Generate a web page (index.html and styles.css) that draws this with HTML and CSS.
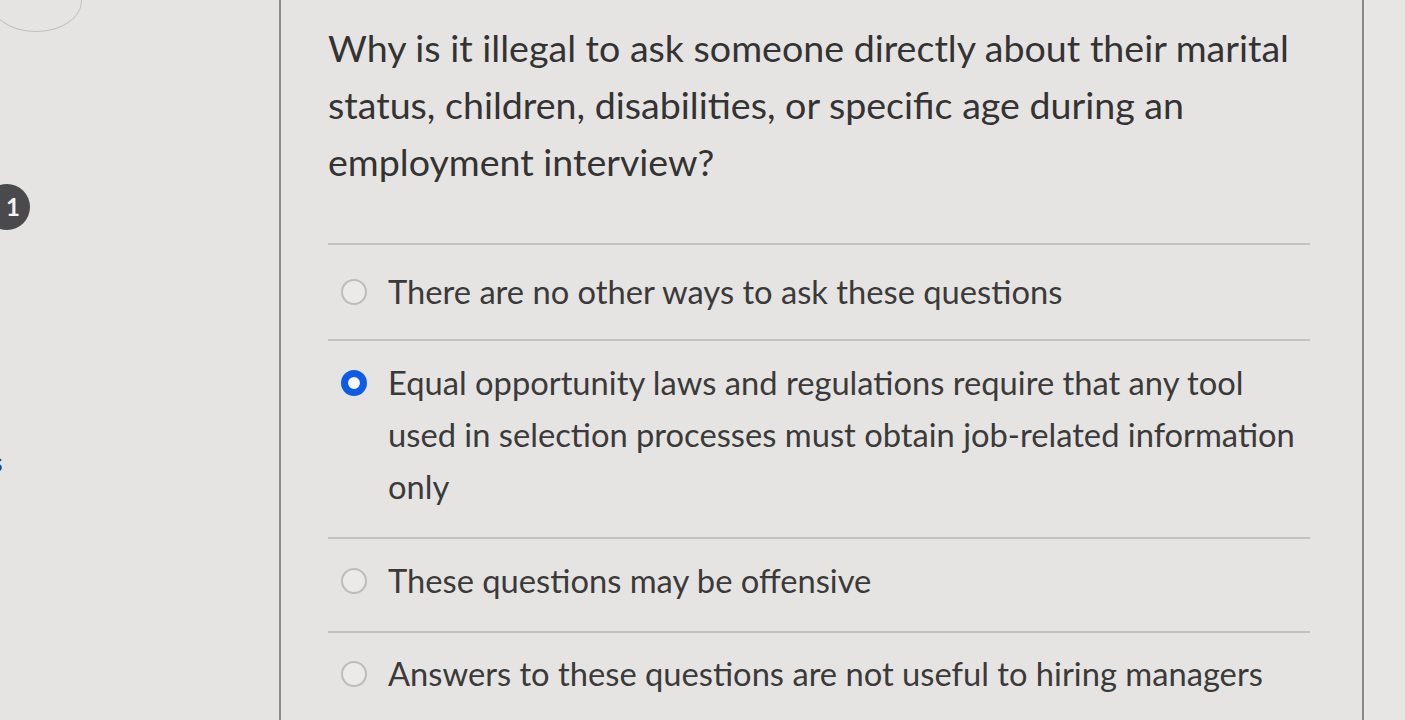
FILE: index.html
```html
<!DOCTYPE html>
<html lang="en">
<head>
<meta charset="utf-8">
<title>Quiz question</title>
<link rel="stylesheet" href="styles.css">
</head>
<body>
<div class="page">
  <aside class="sidebar">
    <span class="corner-arc"></span>
    <span class="qnum">1</span>
    <span class="edge-s">s</span>
  </aside>
  <main class="panel">
    <p class="question">Why is it illegal to ask someone directly about their marital status, children, disabilities, or specific age during an employment interview?</p>
    <ul class="options">
      <li class="option"><span class="radio"></span><span class="label">There are no other ways to ask these questions</span></li>
      <li class="option"><span class="radio checked"></span><span class="label">Equal opportunity laws and regulations require that any tool used in selection processes must obtain job-related information only</span></li>
      <li class="option"><span class="radio"></span><span class="label">These questions may be offensive</span></li>
      <li class="option"><span class="radio"></span><span class="label">Answers to these questions are not useful to hiring managers</span></li>
    </ul>
  </main>
  <div class="rightside"></div>
</div>
</body>
</html>
```
FILE: styles.css
```css
html, body {
  margin: 0;
  padding: 0;
  height: 100%;
}
body {
  background: #e4e2e0;
  font-family: Lato, "Open Sans", sans-serif;
  color: #363636;
  overflow: hidden;
}
.page {
  display: flex;
  height: 720px;
}
.sidebar {
  width: 279px;
  flex: none;
  border-right: 2px solid #8a8a8a;
  position: relative;
  background: #e6e4e2;
}
.corner-arc {
  position: absolute;
  left: -10px;
  top: -30px;
  width: 90px;
  height: 60px;
  border: 1px solid #a8a8a8;
  border-radius: 50%;
  opacity: 0.6;
}
.qnum {
  position: absolute;
  left: -16px;
  top: 184px;
  width: 46px;
  height: 46px;
  border-radius: 50%;
  background: #4a494b;
  color: #f4f4f4;
  font-weight: 700;
  font-size: 24px;
  line-height: 46px;
  text-align: center;
  text-indent: 12px;
}
.edge-s {
  position: absolute;
  left: 0;
  top: 446px;
  width: 8px;
  overflow: hidden;
  font-size: 26px;
  font-weight: 700;
  color: #27407a;
  text-indent: -9px;
}
.panel {
  width: 1083px;
  flex: none;
  border-right: 2px solid #8a8a8a;
  padding: 19px 52px 0 47px;
  box-sizing: border-box;
  background: #e6e4e2;
}
.rightside {
  flex: 1;
  background: #e7e6e4;
}
.question {
  margin: 0;
  font-size: 37.6px;
  line-height: 57px;
  color: #333333;
}
.options {
  list-style: none;
  margin: 53px 0 0 0;
  padding: 0;
  border-top: 2px solid #c4c2c0;
}
.option {
  display: flex;
  align-items: flex-start;
  gap: 21px;
  padding: 16px 0 24px 13px;
  border-bottom: 2px solid #c4c2c0;
  font-size: 32.7px;
  line-height: 52px;
  color: #3a3a3a;
}
.option:first-child {
  padding-top: 21px;
  padding-bottom: 21px;
}
.option:last-child {
  border-bottom: none;
  padding-top: 15px;
}
.radio {
  flex: none;
  width: 22px;
  height: 22px;
  margin-top: 13px;
  border: 2px solid #bdbcbb;
  border-radius: 50%;
  background: #eceae8;
}
.radio.checked {
  width: 12px;
  height: 12px;
  border: 7px solid #0d5ce6;
  background: #f6f8fc;
}
.label {
  flex: 1;
}
```
